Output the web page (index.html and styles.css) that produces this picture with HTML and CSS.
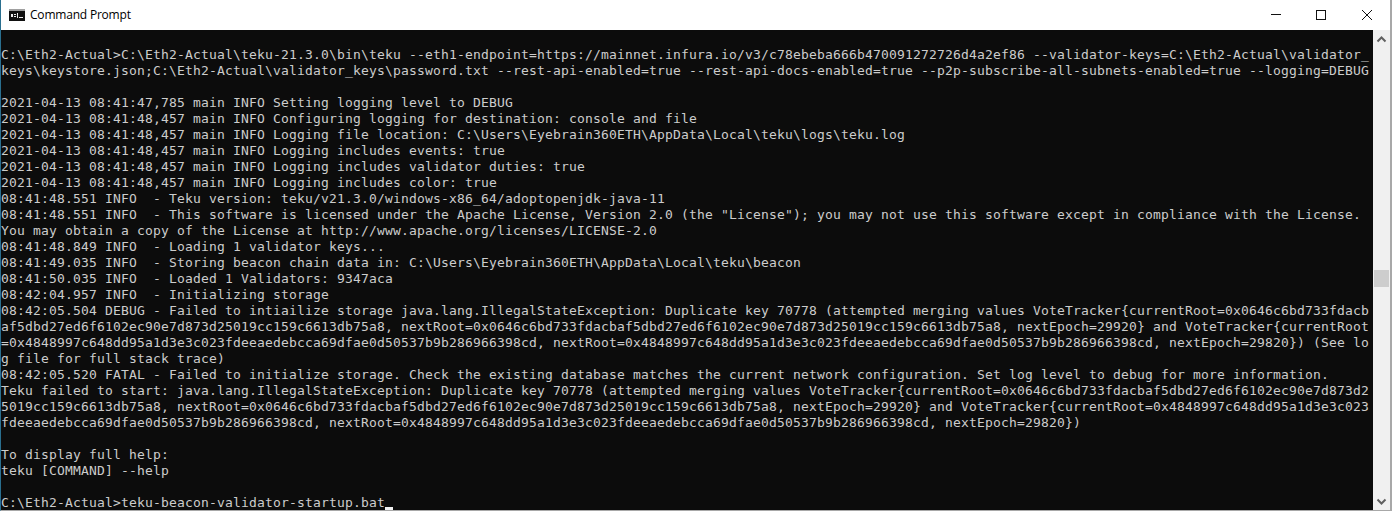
FILE: index.html
```html
<!DOCTYPE html>
<html lang="en">
<head>
<meta charset="utf-8">
<title>Command Prompt</title>
<link rel="stylesheet" href="styles.css">
</head>
<body>
<div class="window">
  <header class="titlebar">
    <svg class="app-icon" width="16" height="12" viewBox="0 0 16 12" aria-hidden="true">
      <rect width="16" height="12" fill="#111"/>
      <rect x="0" y="0" width="16" height="2" fill="#a0a0a0"/>
      <rect x="2" y="5" width="2" height="3" fill="#f0f0f0"/>
      <rect x="5" y="5" width="2" height="1" fill="#f0f0f0"/>
      <rect x="5" y="7" width="2" height="1" fill="#f0f0f0"/>
      <rect x="8" y="4" width="1" height="5" fill="#f0f0f0"/>
      <rect x="10" y="8" width="4" height="1" fill="#f0f0f0"/>
    </svg>
    <span class="title">Command Prompt</span>
    <div class="controls">
      <button class="control" aria-label="Minimize">
        <svg width="10" height="10" viewBox="0 0 10 10"><path d="M1 4.5h10" stroke="#111" stroke-width="1" fill="none"/></svg>
      </button>
      <button class="control" aria-label="Maximize">
        <svg width="10" height="10" viewBox="0 0 10 10"><rect x=".5" y=".5" width="9" height="9" stroke="#111" stroke-width="1" fill="none"/></svg>
      </button>
      <button class="control" aria-label="Close">
        <svg width="10" height="10" viewBox="0 0 10 10"><path d="M0 0l10 10M10 0L0 10" stroke="#111" stroke-width="1" fill="none"/></svg>
      </button>
    </div>
  </header>
  <div class="body">
<pre class="console">

C:\Eth2-Actual&gt;C:\Eth2-Actual\teku-21.3.0\bin\teku --eth1-endpoint=https://mainnet.infura.io/v3/c78ebeba666b470091272726d4a2ef86 --validator-keys=C:\Eth2-Actual\validator_
keys\keystore.json;C:\Eth2-Actual\validator_keys\password.txt --rest-api-enabled=true --rest-api-docs-enabled=true --p2p-subscribe-all-subnets-enabled=true --logging=DEBUG

2021-04-13 08:41:47,785 main INFO Setting logging level to DEBUG
2021-04-13 08:41:48,457 main INFO Configuring logging for destination: console and file
2021-04-13 08:41:48,457 main INFO Logging file location: C:\Users\Eyebrain360ETH\AppData\Local\teku\logs\teku.log
2021-04-13 08:41:48,457 main INFO Logging includes events: true
2021-04-13 08:41:48,457 main INFO Logging includes validator duties: true
2021-04-13 08:41:48,457 main INFO Logging includes color: true
08:41:48.551 INFO  - Teku version: teku/v21.3.0/windows-x86_64/adoptopenjdk-java-11
08:41:48.551 INFO  - This software is licensed under the Apache License, Version 2.0 (the "License"); you may not use this software except in compliance with the License.
You may obtain a copy of the License at http://www.apache.org/licenses/LICENSE-2.0
08:41:48.849 INFO  - Loading 1 validator keys...
08:41:49.035 INFO  - Storing beacon chain data in: C:\Users\Eyebrain360ETH\AppData\Local\teku\beacon
08:41:50.035 INFO  - Loaded 1 Validators: 9347aca
08:42:04.957 INFO  - Initializing storage
08:42:05.504 DEBUG - Failed to intiailize storage java.lang.IllegalStateException: Duplicate key 70778 (attempted merging values VoteTracker{currentRoot=0x0646c6bd733fdacb
af5dbd27ed6f6102ec90e7d873d25019cc159c6613db75a8, nextRoot=0x0646c6bd733fdacbaf5dbd27ed6f6102ec90e7d873d25019cc159c6613db75a8, nextEpoch=29920} and VoteTracker{currentRoot
=0x4848997c648dd95a1d3e3c023fdeeaedebcca69dfae0d50537b9b286966398cd, nextRoot=0x4848997c648dd95a1d3e3c023fdeeaedebcca69dfae0d50537b9b286966398cd, nextEpoch=29820}) (See lo
g file for full stack trace)
08:42:05.520 FATAL - Failed to initialize storage. Check the existing database matches the current network configuration. Set log level to debug for more information.
Teku failed to start: java.lang.IllegalStateException: Duplicate key 70778 (attempted merging values VoteTracker{currentRoot=0x0646c6bd733fdacbaf5dbd27ed6f6102ec90e7d873d2
5019cc159c6613db75a8, nextRoot=0x0646c6bd733fdacbaf5dbd27ed6f6102ec90e7d873d25019cc159c6613db75a8, nextEpoch=29920} and VoteTracker{currentRoot=0x4848997c648dd95a1d3e3c023
fdeeaedebcca69dfae0d50537b9b286966398cd, nextRoot=0x4848997c648dd95a1d3e3c023fdeeaedebcca69dfae0d50537b9b286966398cd, nextEpoch=29820})

To display full help:
teku [COMMAND] --help

C:\Eth2-Actual&gt;teku-beacon-validator-startup.bat<span class="cursor"></span></pre>
    <aside class="scrollbar" aria-hidden="true">
      <svg class="arrow" width="17" height="17" viewBox="0 0 17 17"><path d="M4.5 11.5l4-4 4 4" stroke="#606060" stroke-width="2" fill="none"/></svg>
      <div class="track"><div class="thumb"></div></div>
      <svg class="arrow" width="17" height="17" viewBox="0 0 17 17"><path d="M4.5 6.5l4 4 4-4" stroke="#606060" stroke-width="2" fill="none"/></svg>
    </aside>
  </div>
</div>
</body>
</html>
```
FILE: styles.css
```css
* { box-sizing: border-box; }
html, body { margin: 0; padding: 0; height: 100%; background: #fff; overflow: hidden; }
.window {
  width: 1392px;
  height: 511px;
  display: flex;
  flex-direction: column;
  border-left: 1px solid #2a6f8f;
  border-right: 2px solid #a8a8a8;
  border-bottom: 1px solid #a8a8a8;
  background: #fff;
}
.titlebar {
  height: 30px;
  flex: none;
  display: flex;
  align-items: center;
  padding-left: 8px;
  background: #fff;
}
.app-icon { flex: none; margin-right: 5px; margin-top: -1px; }
.title {
  font: 12px/16px "Open Sans", "Noto Sans", sans-serif;
  letter-spacing: -0.2px;
  color: #000;
  margin-top: -1px;
}
.controls { margin-left: auto; display: flex; height: 30px; }
.control {
  width: 46px;
  height: 30px;
  padding: 0;
  border: 0;
  background: none;
  display: flex;
  align-items: center;
  justify-content: center;
}
.control svg { overflow: visible; }
.body { flex: 1; display: flex; min-height: 0; }
.console {
  flex: 1;
  margin: 0;
  padding: 1px 0 0;
  background: #0c0c0c;
  color: #cccccc;
  font: 13px/16px "DejaVu Sans Mono", monospace;
  letter-spacing: 0.174px;
  white-space: pre;
  overflow: hidden;
}
.cursor {
  display: inline-block;
  width: 8px;
  height: 3px;
  background: #f2f2f2;
  vertical-align: -3px;
}
.scrollbar {
  width: 17px;
  flex: none;
  background: #f0f0f0;
  display: flex;
  flex-direction: column;
}
.arrow { flex: none; display: block; }
.track { flex: 1; padding-top: 223px; }
.thumb { height: 17px; margin: 0 1px; background: #cdcdcd; }
```
